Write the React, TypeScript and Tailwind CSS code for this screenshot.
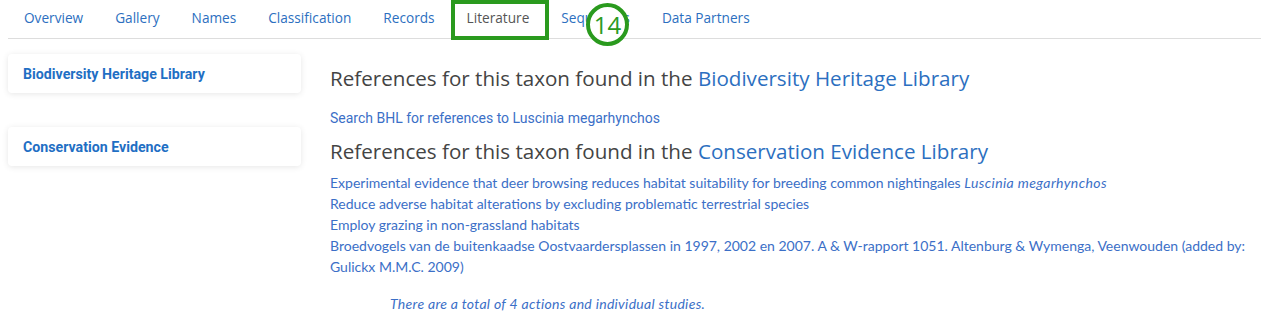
import React from "react";

const tabs = ["Overview", "Gallery", "Names", "Classification", "Records", "Literature", "Sequences", "Data Partners"];

export default function App() {
  return (
    <div className="w-[1269px] h-[316px] bg-white overflow-hidden" style={{ fontFamily: "'Open Sans', sans-serif" }}>
      <div className="px-2">
        <div className="relative flex border-b border-[#dddddd] h-[39px]">
          {tabs.map((t) => (
            <div
              key={t}
              className={`relative px-4 pt-[8px] text-[13.65px] leading-[20px] ${t === "Literature" ? "text-[#555555]" : "text-[#2c6fc0]"}`}
            >
              {t}
              {t === "Literature" && (
                <div className="absolute left-0 top-0 w-[98px] h-[40px] border-[4px] border-[#2a9a1e]" />
              )}
            </div>
          ))}
          <div className="absolute left-[578px] top-[3px] w-[43px] h-[43px] rounded-full border-[4px] border-[#2a9a1e] bg-white flex items-center justify-center text-[#2a9a1e] text-[24px] leading-none">
            14
          </div>
        </div>
        <div className="flex gap-[29px] mt-[15px]">
          <div className="w-[293px] flex flex-col gap-[34px]">
            <div className="h-[39px] rounded-[4px] bg-white shadow-[0_1px_6px_rgba(0,0,0,0.10)] px-[15px] pt-[2px] flex items-center text-[14.2px] font-bold text-[#1f6fc4]" style={{ fontFamily: "Roboto, sans-serif" }}>
              Biodiversity Heritage Library
            </div>
            <div className="h-[39px] rounded-[4px] bg-white shadow-[0_1px_6px_rgba(0,0,0,0.10)] px-[15px] pt-[2px] flex items-center text-[14.2px] font-bold text-[#1f6fc4]" style={{ fontFamily: "Roboto, sans-serif" }}>
              Conservation Evidence
            </div>
          </div>
          <div className="flex-1 pt-[10px]">
            <h2 className="text-[20.6px] leading-[28px] text-[#444444]">
              References for this taxon found in the <span className="text-[#2c6fc0]">Biodiversity Heritage Library</span>
            </h2>
            <div className="mt-[16px] text-[14px] leading-[20px] text-[#3b6fc7]" style={{ fontFamily: "Roboto, sans-serif" }}>
              Search BHL for references to Luscinia megarhynchos
            </div>
            <h2 className="mt-[9px] text-[20.6px] leading-[28px] text-[#444444]">
              References for this taxon found in the <span className="text-[#2c6fc0]">Conservation Evidence Library</span>
            </h2>
            <div className="mt-[7px] text-[14px] leading-[21px] text-[#3b6fc7]" style={{ fontFamily: "Lato, sans-serif" }}>
              <div>Experimental evidence that deer browsing reduces habitat suitability for breeding common nightingales <i className="tracking-[0.4px]">Luscinia megarhynchos</i></div>
              <div>Reduce adverse habitat alterations by excluding problematic terrestrial species</div>
              <div>Employ grazing in non-grassland habitats</div>
              <div>Broedvogels van de buitenkaadse Oostvaardersplassen in 1997, 2002 en 2007. A &amp; W-rapport 1051. Altenburg &amp; Wymenga, Veenwouden (added by: Gulickx M.M.C. 2009)</div>
              <div className="mt-[16px] pl-[60px] italic tracking-[0.3px]">There are a total of 4 actions and individual studies.</div>
            </div>
          </div>
        </div>
      </div>
    </div>
  );
}
